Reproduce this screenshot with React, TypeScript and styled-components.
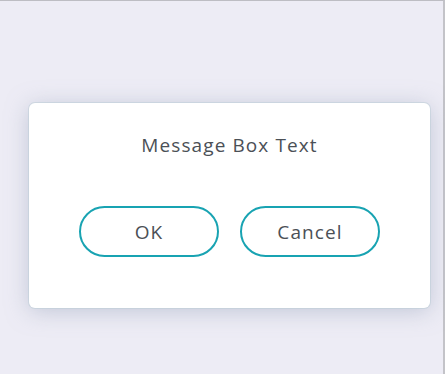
import React from "react";
import styled, { createGlobalStyle } from "styled-components";

const GlobalStyle = createGlobalStyle`
    html, body {
        margin: 0;
        padding: 0;
        background: #edecf5;
    }
    * {
        box-sizing: border-box;
    }
`;

const Page = styled.div`
    width: 445px;
    height: 374px;
    padding: 102px 0 0 29px;
    background: #edecf5;
    border-top: 1px solid #bdbdc3;
    border-right: 2px solid #c3c3c8;
    font-family: "Open Sans", "Liberation Sans", sans-serif;
`;

const MessageBox = styled.div`
    width: 401px;
    height: 205px;
    display: flex;
    flex-direction: column;
    align-items: center;
    padding-top: 31px;
    background: #ffffff;
    border-radius: 6px;
    box-shadow: 0 0 0 1px rgba(190, 205, 215, 0.55),
        0 3px 22px rgba(150, 162, 185, 0.5);
`;

const MessageText = styled.div`
    font-size: 19px;
    line-height: 22px;
    color: #4b5056;
    letter-spacing: 1.1px;
`;

const ButtonRow = styled.div`
    display: flex;
    gap: 21px;
    margin-top: 50px;
`;

const DialogButton = styled.button`
    width: 140px;
    height: 51px;
    border: 2px solid #18a3b2;
    border-radius: 26px;
    background: #ffffff;
    color: #4b5056;
    font-family: inherit;
    font-size: 19px;
    letter-spacing: 1.1px;
    cursor: pointer;
`;

export default function App() {
    return (
        <>
            <GlobalStyle />
            <Page>
                <MessageBox>
                    <MessageText>Message Box Text</MessageText>
                    <ButtonRow>
                        <DialogButton>OK</DialogButton>
                        <DialogButton>Cancel</DialogButton>
                    </ButtonRow>
                </MessageBox>
            </Page>
        </>
    );
}
